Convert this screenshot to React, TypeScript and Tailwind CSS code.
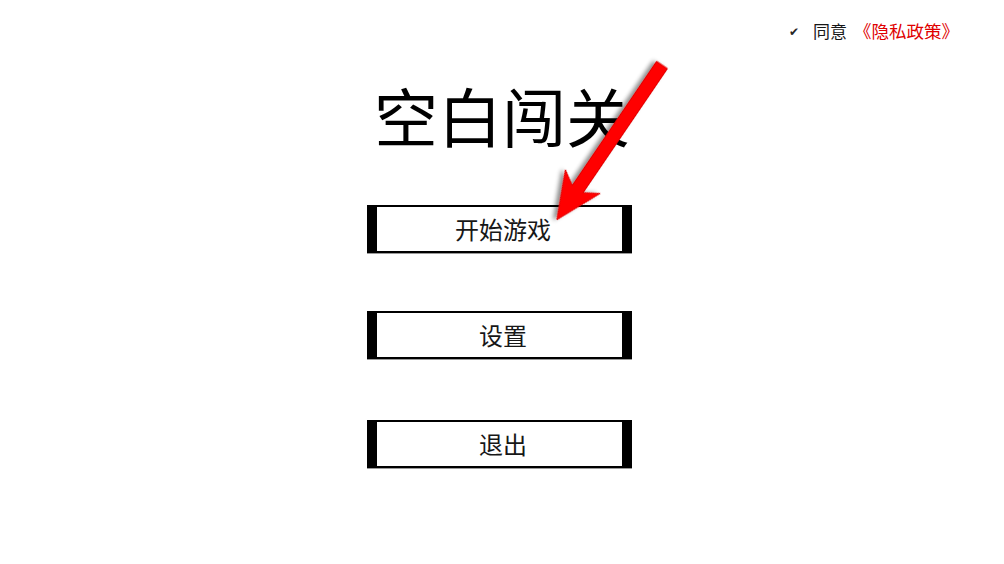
import React from 'react';

const cjk = { fontFamily: '"Noto Sans CJK SC", "Noto Sans", sans-serif' };

// Menu entries of the start screen, with the space above each one
const menuItems = [
  { label: '开始游戏', top: 'mt-0' },
  { label: '设置', top: 'mt-[58px]' },
  { label: '退出', top: 'mt-[61px]' },
];

function Arrow() {
  // Red pointer drawn over the title, aimed at the first button
  return (
    <svg
      className="absolute left-0 top-0 pointer-events-none"
      width="1004"
      height="564"
      viewBox="0 0 1004 564"
    >
      <defs>
        <filter id="shadow" x="-20%" y="-20%" width="140%" height="140%">
          <feDropShadow dx="2" dy="3" stdDeviation="2" floodColor="#000" floodOpacity="0.45" />
        </filter>
      </defs>
      <g transform="translate(662 65) rotate(124.2)" filter="url(#shadow)">
        <polygon
          points="0,-6.5 150,-6.5 141,-21 187,0 141,21 150,6.5 0,6.5"
          fill="#ff0000"
          stroke="#e00000"
          strokeWidth="1"
          strokeLinejoin="round"
        />
      </g>
    </svg>
  );
}

export default function App() {
  return (
    <div className="relative w-full h-[564px] bg-white overflow-hidden" style={cjk}>
      {/* Privacy agreement, top right */}
      <div className="flex justify-end items-center pt-[20px] pr-[45px] h-[42px] text-[17px] leading-[22px]">
        <span className="text-[12px] text-neutral-800 mr-[14px]">✔</span>
        <span className="text-neutral-900">同意</span>
        <span className="ml-[7px] text-[17.5px] text-[#e00000]">《隐私政策》</span>
      </div>

      {/* Title */}
      <h1 className="mt-[40px] text-center text-[64px] leading-[64px] font-normal text-black">
        空白闯关
      </h1>

      {/* Menu buttons */}
      <div className="mt-[59px] flex flex-col items-center pr-[5px]">
        {menuItems.map(item => (
          <button
            key={item.label}
            className={`${item.top} w-[265px] h-[48px] border-x-[10px] border-y-2 border-black bg-white pl-[7px] text-[24px] leading-none text-neutral-900 shadow-[0_1px_0_#9a9a9a] flex items-center justify-center`}
          >
            {item.label}
          </button>
        ))}
      </div>

      <Arrow />
    </div>
  );
}
